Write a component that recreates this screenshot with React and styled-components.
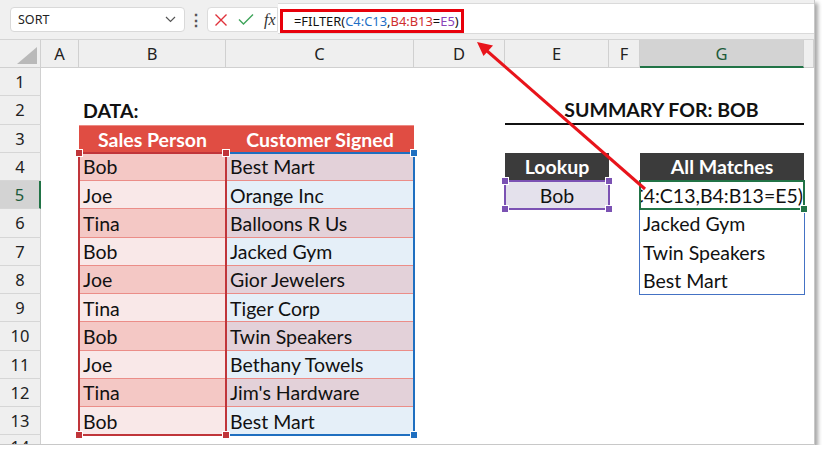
import React from "react";
import styled, { createGlobalStyle } from "styled-components";

const GlobalStyle = createGlobalStyle`
  body {
    margin: 0;
    background: #fff;
  }
`;

const Window = styled.div`
  position: relative;
  width: 815px;
  height: 445px;
  display: flex;
  flex-direction: column;
  overflow: hidden;
  background: #fff;
  box-shadow: 3px 3px 4px rgba(0, 0, 0, 0.35);
  border-right: 1px solid #c8c8c8;
  border-bottom: 1px solid #c8c8c8;
  box-sizing: border-box;
`;

const TopBar = styled.div`
  height: 40px;
  flex: none;
  display: flex;
  align-items: flex-start;
  background: #f0f0f0;
  border-bottom: 1px solid #d4d4d4;
  box-sizing: border-box;
  padding: 7px 0 0 10px;
  font-family: "Noto Sans", "Open Sans", sans-serif;
`;

const NameBox = styled.div`
  width: 175px;
  height: 25px;
  box-sizing: border-box;
  background: #fff;
  border: 1px solid #d9d9d9;
  border-radius: 4px;
  display: flex;
  align-items: center;
  justify-content: space-between;
  padding: 0 8px 0 7px;
  font-size: 12.5px;
  color: #222;
`;

const Dots = styled.div`
  width: 22px;
  height: 25px;
  display: flex;
  align-items: center;
  justify-content: center;
  color: #555;
  font-size: 16px;
  font-weight: bold;
`;

const FxBox = styled.div`
  width: 71px;
  height: 25px;
  box-sizing: border-box;
  background: #fff;
  border: 1px solid #dcdcdc;
  border-radius: 4px 0 0 4px;
  display: flex;
  align-items: center;
  gap: 10px;
  padding-left: 6px;
`;

const Fx = styled.span`
  font-family: "Liberation Serif", serif;
  font-style: italic;
  font-size: 16px;
  color: #333;
`;

const FormulaBox = styled.div`
  flex: 1;
  margin-top: -4px;
  height: 29px;
  background: #fff;
  border-top: 1px solid #dadada;
  border-bottom: 1px solid #dadada;
  display: flex;
  align-items: center;
  padding-left: 2px;
`;

const FormulaFrame = styled.div`
  width: 184px;
  height: 24px;
  box-sizing: border-box;
  margin-top: 4px;
  border: 3px solid #e8000b;
  display: flex;
  align-items: center;
  padding-left: 11px;
  font-size: 12.9px;
  color: #111;
  white-space: nowrap;
`;

const Ref = styled.span`
  color: ${(p) => p.$color};
`;

const Sheet = styled.div`
  flex: 1;
  display: grid;
  grid-template-columns: 41px 38px 147px 188px 91px 104px 31px 164px 1fr;
  grid-template-rows: 28px repeat(13, 28.25px) 1fr;
  font-family: "Lato", "Noto Sans", sans-serif;
  font-size: 19.5px;
  color: #111;
`;

const Corner = styled.div`
  grid-column: 1;
  grid-row: 1;
  background: #efefef;
  border-right: 1px solid #d0d0d0;
  border-bottom: 1px solid #d0d0d0;
  position: relative;
  &::after {
    content: "";
    position: absolute;
    right: 3px;
    bottom: 3px;
    width: 20px;
    height: 17px;
    background: #b9b9b9;
    clip-path: polygon(100% 0, 100% 100%, 0 100%);
  }
`;

const ColHead = styled.div`
  grid-column: ${(p) => p.$col};
  grid-row: 1;
  background: ${(p) => (p.$active ? "#d3d3d3" : "#efefef")};
  border-right: 1px solid #d0d0d0;
  border-bottom: ${(p) => (p.$active ? "2px solid #217346" : "1px solid #d0d0d0")};
  display: flex;
  align-items: center;
  justify-content: center;
  font-family: "Noto Sans", "Open Sans", sans-serif;
  font-size: 16.5px;
  color: ${(p) => (p.$active ? "#1d5b3a" : "#222")};
`;

const RowHead = styled.div`
  grid-column: 1;
  grid-row: ${(p) => p.$row + 1};
  background: ${(p) => (p.$active ? "#d3d3d3" : "#efefef")};
  border-right: ${(p) => (p.$active ? "2px solid #217346" : "1px solid #d0d0d0")};
  border-bottom: 1px solid #d6d6d6;
  display: flex;
  align-items: center;
  justify-content: center;
  font-family: "Noto Sans", "Open Sans", sans-serif;
  font-size: 16.5px;
  color: ${(p) => (p.$active ? "#1d5b3a" : "#222")};
`;

const Label = styled.div`
  grid-column: ${(p) => p.$col};
  grid-row: ${(p) => p.$row + 1};
  display: flex;
  align-items: center;
  padding-left: 4px;
  font-weight: bold;
  white-space: nowrap;
`;

const Summary = styled.div`
  grid-column: 6 / 9;
  grid-row: 3;
  display: flex;
  align-items: center;
  justify-content: center;
  padding-left: 14px;
  font-weight: bold;
  white-space: nowrap;
  border-bottom: 2px solid #111;
`;

const TableHead = styled.div`
  grid-column: ${(p) => p.$col};
  grid-row: 4;
  background: #e04d43;
  border-top: 1px solid #ec8a84;
  color: #fff;
  font-weight: bold;
  display: flex;
  align-items: center;
  justify-content: center;
`;

const DataCell = styled.div`
  grid-column: ${(p) => p.$col};
  grid-row: ${(p) => p.$row + 1};
  background: ${(p) => p.$bg};
  border-bottom: 1px solid #eb8d88;
  display: flex;
  align-items: center;
  padding: 1px 0 0 4px;
  white-space: nowrap;
`;

const DarkHead = styled.div`
  grid-column: ${(p) => p.$col};
  grid-row: 5;
  background: #3b3b3b;
  color: #fff;
  font-weight: bold;
  display: flex;
  align-items: center;
  justify-content: center;
`;

const LookupCell = styled.div`
  grid-column: 6;
  grid-row: 6;
  background: #e4e1ec;
  display: flex;
  align-items: center;
  justify-content: center;
`;

const FormulaCell = styled.div`
  grid-column: 8;
  grid-row: 6;
  overflow: hidden;
  display: flex;
  align-items: center;
  justify-content: flex-end;
  padding-right: 1px;
  white-space: nowrap;
`;

const SpillCell = styled.div`
  grid-column: 8;
  grid-row: ${(p) => p.$row + 1};
  display: flex;
  align-items: center;
  padding: 1px 0 0 3px;
  white-space: nowrap;
`;

const RangeBorder = styled.div`
  grid-column: ${(p) => p.$col};
  grid-row: ${(p) => p.$rows};
  border: ${(p) => p.$width || 2}px solid ${(p) => p.$color};
  margin: -1px;
  position: relative;
  pointer-events: none;
  z-index: ${(p) => p.$z || 1};
`;

const Handle = styled.span`
  position: absolute;
  width: 6px;
  height: 6px;
  background: ${(p) => p.$color};
  border: 1px solid #fff;
  ${(p) => (p.$top ? "top: -5px;" : "bottom: -5px;")}
  ${(p) => (p.$left ? "left: -5px;" : "right: -5px;")}
`;

const Arrow = styled.svg`
  position: absolute;
  left: 0;
  top: 0;
  pointer-events: none;
  z-index: 5;
`;

const people = ["Bob", "Joe", "Tina", "Bob", "Joe", "Tina", "Bob", "Joe", "Tina", "Bob"];
const customers = [
  "Best Mart",
  "Orange Inc",
  "Balloons R Us",
  "Jacked Gym",
  "Gior Jewelers",
  "Tiger Corp",
  "Twin Speakers",
  "Bethany Towels",
  "Jim's Hardware",
  "Best Mart",
];
const columns = ["A", "B", "C", "D", "E", "F", "G", ""];

const Corners = ({ color, spots }) =>
  spots.map((s) => (
    <Handle key={s} $color={color} $top={s[0] === "t"} $left={s[1] === "l"} />
  ));

const App = () => {
  return (
    <>
      <GlobalStyle />
      <Window>
        <TopBar>
          <NameBox>
            <span>SORT</span>
            <svg width="11" height="7" viewBox="0 0 11 7">
              <path d="M1 1l4.5 4.5L10 1" fill="none" stroke="#555" strokeWidth="1.2" />
            </svg>
          </NameBox>
          <Dots>⋮</Dots>
          <FxBox>
            <svg width="14" height="14" viewBox="0 0 14 14">
              <path d="M1.5 1.5l11 11M12.5 1.5l-11 11" stroke="#e0313b" strokeWidth="1.4" />
            </svg>
            <svg width="16" height="13" viewBox="0 0 16 13">
              <path d="M1 6.5l4.5 4.5L15 1.5" fill="none" stroke="#3fa45b" strokeWidth="1.4" />
            </svg>
            <Fx>fx</Fx>
          </FxBox>
          <FormulaBox>
            <FormulaFrame>
              =FILTER(<Ref $color="#1f6fc5">C4:C13</Ref>,<Ref $color="#cf2f2f">B4:B13</Ref>=
              <Ref $color="#8a44b8">E5</Ref>)
            </FormulaFrame>
          </FormulaBox>
        </TopBar>

        <Sheet>
          <Corner />
          {columns.map((c, i) => (
            <ColHead key={i} $col={i + 2} $active={c === "G"}>
              {c}
            </ColHead>
          ))}
          {Array.from({ length: 14 }, (_, i) => (
            <RowHead key={i} $row={i + 1} $active={i + 1 === 5}>
              {i + 1}
            </RowHead>
          ))}

          <Label $col={3} $row={2}>DATA:</Label>
          <Summary>SUMMARY FOR: BOB</Summary>

          <TableHead $col={3}>Sales Person</TableHead>
          <TableHead $col={4}>Customer Signed</TableHead>

          {people.map((p, i) => (
            <DataCell key={"p" + i} $col={3} $row={i + 4} $bg={i % 2 === 0 ? "#f4c8c5" : "#f9e8e8"}>
              {p}
            </DataCell>
          ))}
          {customers.map((c, i) => (
            <DataCell key={"c" + i} $col={4} $row={i + 4} $bg={i % 2 === 0 ? "#e3d1d9" : "#e5eff8"}>
              {c}
            </DataCell>
          ))}

          <DarkHead $col={6}>Lookup</DarkHead>
          <LookupCell>Bob</LookupCell>
          <DarkHead $col={8}>All Matches</DarkHead>
          <FormulaCell>=FILTER(C4:C13,B4:B13=E5)</FormulaCell>
          <SpillCell $row={6}>Jacked Gym</SpillCell>
          <SpillCell $row={7}>Twin Speakers</SpillCell>
          <SpillCell $row={8}>Best Mart</SpillCell>

          <RangeBorder $col={4} $rows="5 / 15" $color="#1f6fc0">
            <Corners color="#1f6fc0" spots={["tr", "br"]} />
          </RangeBorder>
          <RangeBorder $col={3} $rows="5 / 15" $color="#c0353a" $z={2}>
            <Corners color="#c0353a" spots={["tl", "tr", "bl", "br"]} />
          </RangeBorder>
          <RangeBorder $col={6} $rows="6" $color="#7b52b3">
            <Corners color="#7b52b3" spots={["tl", "tr", "bl", "br"]} />
          </RangeBorder>
          <RangeBorder $col={8} $rows="6 / 10" $color="#4472c4" $width={1} />
          <RangeBorder $col={8} $rows="6" $color="#217346" $z={2}>
            <Corners color="#217346" spots={["br"]} />
          </RangeBorder>
        </Sheet>

        <Arrow width="815" height="445" viewBox="0 0 815 445">
          <line x1="645" y1="189" x2="486" y2="50" stroke="#e8141b" strokeWidth="3" />
          <path d="M477 42l16 3.5-9.5 10.5z" fill="#e8141b" />
        </Arrow>
      </Window>
    </>
  );
};

export default App;
